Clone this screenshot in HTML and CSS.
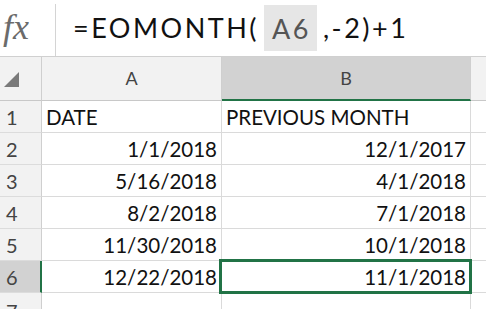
FILE: index.html
```html
<!DOCTYPE html>
<html>
<head>
<meta charset="utf-8">
<link rel="stylesheet" href="styles.css">
</head>
<body>
<div class="formula-bar">
  <div class="fx">fx</div>
  <div class="formula">=EOMONTH(<span class="ref">A6</span>,-2)+1</div>
</div>
<div class="sheet">
  <div class="corner"><span class="tri"></span></div>
  <div class="colhead">A</div>
  <div class="colhead active">B</div>
  <div class="colhead rest"></div>

  <div class="rowhead">1</div>
  <div class="cell">DATE</div>
  <div class="cell">PREVIOUS MONTH</div>
  <div class="cell rest"></div>

  <div class="rowhead">2</div>
  <div class="cell num">1/1/2018</div>
  <div class="cell num">12/1/2017</div>
  <div class="cell rest"></div>

  <div class="rowhead">3</div>
  <div class="cell num">5/16/2018</div>
  <div class="cell num">4/1/2018</div>
  <div class="cell rest"></div>

  <div class="rowhead">4</div>
  <div class="cell num">8/2/2018</div>
  <div class="cell num">7/1/2018</div>
  <div class="cell rest"></div>

  <div class="rowhead">5</div>
  <div class="cell num">11/30/2018</div>
  <div class="cell num">10/1/2018</div>
  <div class="cell rest"></div>

  <div class="rowhead active">6</div>
  <div class="cell num">12/22/2018</div>
  <div class="cell num selected">11/1/2018</div>
  <div class="cell rest"></div>

  <div class="rowhead">7</div>
  <div class="cell"></div>
  <div class="cell"></div>
  <div class="cell rest"></div>
</div>
</body>
</html>
```

FILE: styles.css
```css
* { box-sizing: border-box; }
html, body { margin: 0; padding: 0; background: #fff; overflow: hidden; }
body { width: 486px; height: 309px; font-family: Lato, "Open Sans", sans-serif; color: #111; }

.formula-bar {
  display: flex;
  height: 56px;
  background: #fff;
}
.fx {
  width: 56px;
  margin: 4px 0 0 0;
  border-right: 1px solid #d4d4d4;
  font-family: "Liberation Serif", serif;
  font-style: italic;
  font-size: 36px;
  color: #6b6b6b;
  padding: 4px 0 0 3px;
  line-height: 38px;
}
.formula {
  display: flex;
  align-items: center;
  padding-left: 17px;
  font-size: 27px;
  letter-spacing: 2.5px;
  color: #111;
  height: 54px;
}
.ref {
  background: #e6e6e6;
  color: #555;
  padding: 0 6px 0 8px;
  margin: 0 6px 0 5px;
  height: 46px;
  display: flex;
  align-items: center;
  margin-top: 2px;
}

.sheet {
  display: grid;
  grid-template-columns: 42px 180px 249px 1fr;
  grid-template-rows: 44px repeat(6, 32px) 17px;
  border-top: 1px solid #d0d0d0;
}
.corner, .colhead {
  background: #f2f2f2;
  border-right: 1px solid #cfcfcf;
  border-bottom: 1px solid #c8c8c8;
}
.corner { position: relative; }
.tri {
  position: absolute;
  left: 4px;
  top: 15px;
  width: 0;
  height: 0;
  border-left: 15px solid transparent;
  border-bottom: 15px solid #7a7a7a;
}
.colhead {
  display: flex;
  align-items: center;
  justify-content: center;
  font-size: 18px;
  color: #444;
  padding-bottom: 1px;
}
.colhead.active {
  background: #d2d2d2;
  border-bottom: 2px solid #217346;
}
.colhead.rest { border-right: 0; }

.rowhead {
  background: #f2f2f2;
  border-right: 1px solid #cfcfcf;
  border-bottom: 1px solid #dcdcdc;
  font-size: 20px;
  color: #444;
  padding-left: 6px;
  display: flex;
  align-items: flex-end;
  padding-bottom: 3px;
  overflow: hidden;
}
.rowhead:nth-last-child(4) { align-items: flex-start; padding-top: 6px; }
.rowhead.active {
  background: #d2d2d2;
  border-right: 2px solid #217346;
}
.cell {
  border-right: 1px solid #dadada;
  border-bottom: 1px solid #dadada;
  font-size: 20.5px;
  color: #111;
  display: flex;
  align-items: flex-end;
  padding: 0 4px 3px 4px;
  white-space: nowrap;
}
.cell.num { justify-content: flex-end; }
.cell.rest { border-right: 0; }
.selected { position: relative; }
.selected::after {
  content: "";
  position: absolute;
  left: -3px;
  top: -2px;
  right: -2px;
  bottom: -2px;
  border: 3px solid #217346;
}
```
